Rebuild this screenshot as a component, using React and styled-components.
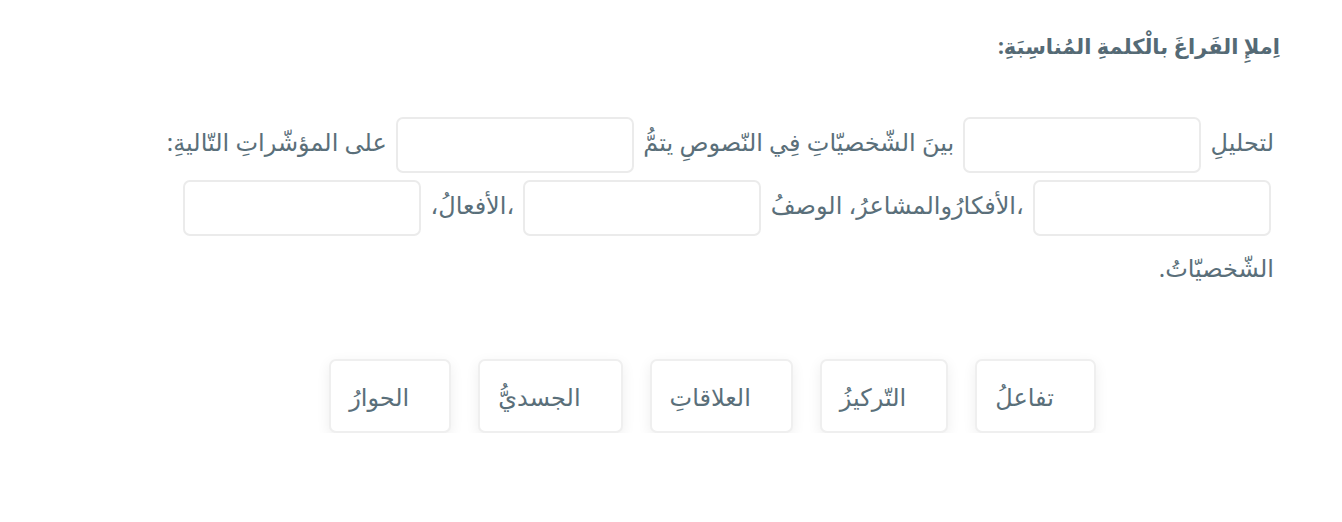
import React, { useState } from 'react';
import styled, { createGlobalStyle } from 'styled-components';

const GlobalStyle = createGlobalStyle`
  body {
    margin: 0;
    background: #ffffff;
    font-family: "Noto Sans", "DejaVu Sans", sans-serif;
  }
`;

const Page = styled.div`
  direction: rtl;
  padding: 28px 62px 0 145px;
  color: #5a6f7a;
`;

const Title = styled.h3`
  margin: 0;
  font-size: 21px;
  font-weight: 700;
  line-height: 36px;
  color: #556a75;
`;

const Sentence = styled.p`
  margin: 46px 6px 0 0;
  font-size: 24px;
  line-height: 63px;
`;

const Blank = styled.input`
  box-sizing: border-box;
  width: 238px;
  height: 56px;
  margin: 0 3px;
  vertical-align: middle;
  border: 2px solid #ebebeb;
  border-radius: 7px;
  background: #fff;
  outline: none;
  font: inherit;
  color: inherit;
  text-align: center;
`;

const WordBank = styled.div`
  display: flex;
  justify-content: center;
  gap: 27px;
  margin-top: 60px;
`;

const Word = styled.button`
  height: 74px;
  padding: 0 40px 0 18px;
  border: 2px solid #efefef;
  border-radius: 7px;
  background: #fff;
  box-shadow: 0 4px 14px rgba(0, 0, 0, 0.07);
  font-family: inherit;
  font-size: 24px;
  color: #5a6f7a;
  cursor: pointer;
`;

const words = ['تفاعلُ', 'التّركيزُ', 'العلاقاتِ', 'الجسديُّ', 'الحوارُ'];

export default function App() {
  const [answers, setAnswers] = useState(['', '', '', '', '']);

  const setAnswer = (i, v) => {
    const next = [...answers];
    next[i] = v;
    setAnswers(next);
  };

  const blank = (i) => (
    <Blank value={answers[i]} onChange={(e) => setAnswer(i, e.target.value)} />
  );

  return (
    <>
      <GlobalStyle />
      <Page>
        <Title>اِملإِ الفَراغَ بالْكلمةِ المُناسِبَةِ:</Title>
        <Sentence>
          لتحليلِ {blank(0)} بينَ الشّخصيّاتِ فِي النّصوصِ يتمُّ {blank(1)} على المؤشّراتِ التّاليةِ: {blank(2)} ،الأفكارُوالمشاعرُ، الوصفُ {blank(3)} ،الأفعالُ، {blank(4)} الشّخصيّاتُ.
        </Sentence>
        <WordBank>
          {words.map((w) => (
            <Word key={w}>{w}</Word>
          ))}
        </WordBank>
      </Page>
    </>
  );
}
